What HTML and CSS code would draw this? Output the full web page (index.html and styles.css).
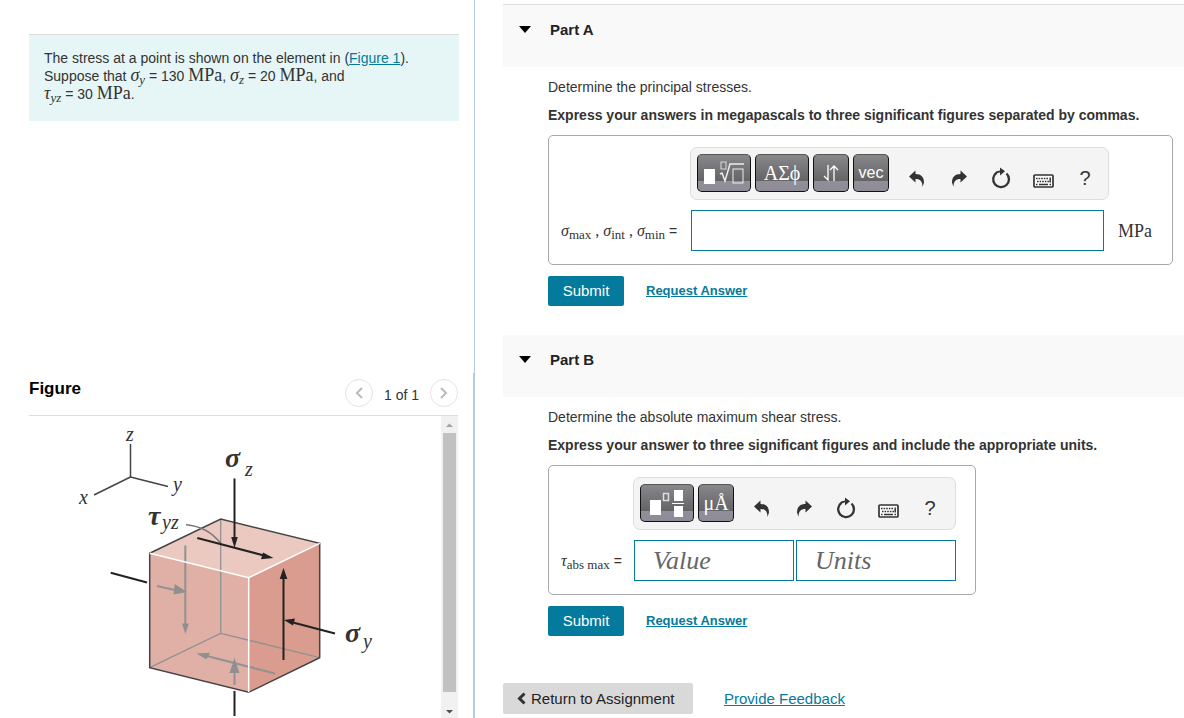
FILE: index.html
```html
<!DOCTYPE html>
<html lang="en">
<head>
    <meta charset="UTF-8">
    <meta name="viewport" content="width=device-width, initial-scale=1.0">
    <title>Principal stresses</title>
    <link rel="stylesheet" href="styles.css">
</head>
<body>
    <!-- shared toolbar icons -->
    <svg class="sprite" width="0" height="0" aria-hidden="true">
        <symbol id="undo" viewBox="0 0 16 17">
            <path d="M0 6.5 6.5 0.5V4C12 4 15 7 15 12.5L13.5 17C13.5 11.500 11.500 9 6.500 9V12.500Z"/>
        </symbol>
        <symbol id="redo" viewBox="0 0 16 17">
            <path d="M16 6.5 9.500 0.500V4C4 4 1 7 1 12.500L2.500 17C2.500 11.500 4.500 9 9.500 9V12.500Z"/>
        </symbol>
        <symbol id="reset" viewBox="0 0 20 22">
            <path d="M5.500 5.800A7.900 7.900 0 1 0 15.500 6.500" fill="none" stroke="#333" stroke-width="2.300"/>
            <path d="M9 0.500 14 4.300 9 8.500V5.300L5 6.700V4.500L9 3.400Z"/>
        </symbol>
        <symbol id="keyboard" viewBox="0 0 21 14">
            <rect x="1" y="1" width="19" height="12" rx="1" fill="#fff" stroke="#333" stroke-width="1.700"/>
            <path d="M3 4.500H16M4 7.500H16" stroke="#333" stroke-width="1.600" stroke-dasharray="1.600 1"/>
            <path d="M17.200 3.500V8.500M3 10.500H4.500M6 10.500H15M16.500 10.500H18" stroke="#333" stroke-width="1.500"/>
        </symbol>
        <symbol id="caret" viewBox="0 0 12 7">
            <path d="M0 0H12L6 7Z"/>
        </symbol>
    </svg>

    <div class="page">
        <aside class="left">
            <section class="problem-pane">
                <p class="problem">
                    The stress at a point is shown on the element in (<a href="#figure">Figure 1</a>).
                    Suppose that <span class="nowrap"><span class="math"><i>σ<sub>y</sub></i></span> = 130 <span class="math">MPa</span></span>,
                    <span class="nowrap"><span class="math"><i>σ<sub>z</sub></i></span> = 20 <span class="math">MPa</span></span>, and
                    <span class="nowrap"><span class="math"><i>τ<sub>yz</sub></i></span> = 30 <span class="math">MPa</span>.</span>
                </p>
            </section>

            <section class="figure-pane" id="figure">
                <div class="figure-header">
                    <h2>Figure</h2>
                    <div class="pager">
                        <button type="button" aria-label="Previous figure"><svg width="8" height="12" viewBox="0 0 8 12"><path d="M7 1 2 6l5 5"/></svg></button>
                        <span>1 of 1</span>
                        <button type="button" aria-label="Next figure"><svg width="8" height="12" viewBox="0 0 8 12"><path d="M1 1l5 5-5 5"/></svg></button>
                    </div>
                </div>
                <div class="figure-body">
                    <svg class="drawing" width="412" height="302" viewBox="29 416 412 302">
                        <!-- axes -->
                        <g class="axes">
                            <path d="M130.500 444V477L94 495M130.500 477 168 486.500"/>
                        </g>
                        <!-- cube faces -->
                        <path fill="#ebc9c1" d="M220.700 519 319.700 543.300 248.700 577.700 149.700 553.300Z"/>
                        <path fill="#e0b0a7" d="M149.700 553.300 248.700 577.700V692.300L149.700 667.700Z"/>
                        <path fill="#d99c8e" d="M248.700 577.700 319.700 543.300V657.700L248.700 692.300Z"/>
                        <!-- hidden edges and rear arrows -->
                        <g class="hidden-lines">
                            <path d="M220.700 519V633.300L149.700 667.700M220.700 633.300 319.700 657.700"/>
                            <path class="thick" d="M185.300 545.500V625M157 586 177 590.500M275 673.500 207 656M234.500 685V670"/>
                            <path class="head" d="M182 623.500H188.800L185.400 634Z"/>
                            <path class="head" d="M174.700 584 187 592 173.500 594.500Z"/>
                            <path class="head" d="M196.500 653.500 210 652.800 206.500 659.500Z"/>
                            <path class="head" d="M234.500 658 239.500 673H229.500Z"/>
                        </g>
                        <g class="edges">
                            <path d="M149.700 553.300 220.700 519 319.700 543.300V657.700L248.700 692.300 149.700 667.700Z"/>
                            <path class="light" d="M149.700 553.300 248.700 577.700 319.700 543.300M248.700 577.700V692.300"/>
                        </g>
                        <path class="leader" d="M186 524.700C201 526 212 532 220.700 543.300"/>
                        <!-- front arrows -->
                        <g class="arrows">
                            <path d="M234.500 478.500V538M197.300 538 264 555.500M110.700 572.700 147 582.500M283.500 660V577M335 633.500 293 622.500M234.500 691V716"/>
                            <path class="head" d="M231.200 537H237.800L234.500 548Z"/>
                            <path class="head" d="M263 552.500 273.500 558 261 559.300Z"/>
                            <path class="head" d="M283.500 568 287.300 579H279.700Z"/>
                            <path class="head" d="M284 620 295 618.500 293 625.500Z"/>
                        </g>
                        <g class="names">
                            <text x="126" y="441">z</text>
                            <text x="173" y="491">y</text>
                            <text x="79" y="504">x</text>
                            <text class="greek" x="225" y="467">σ</text>
                            <text x="245" y="476">z</text>
                            <text class="greek" x="148" y="525">τ</text>
                            <text x="162" y="529">yz</text>
                            <text class="greek" x="345" y="642">σ</text>
                            <text x="363" y="648">y</text>
                        </g>
                    </svg>
                    <div class="scrollbar" aria-hidden="true">
                        <svg width="17" height="17" viewBox="0 0 17 17"><path fill="#a3a3a3" d="M5 11h7L8.500 7.500Z"/></svg>
                        <div class="thumb"></div>
                        <svg width="17" height="17" viewBox="0 0 17 17"><path fill="#505050" d="M5 9h7L8.500 12.500Z"/></svg>
                    </div>
                </div>
            </section>
        </aside>

        <main class="right">
            <section class="part first">
                <header class="part-header">
                    <svg width="12" height="7"><use href="#caret"/></svg>
                    <h2>Part A</h2>
                </header>
                <div class="part-body">
                    <p>Determine the principal stresses.</p>
                    <p class="instructions">Express your answers in megapascals to three significant figures separated by commas.</p>
                    <div class="answer wide">
                        <div class="toolbar">
                            <button type="button" class="palette large" aria-label="Templates">
                                <svg width="42" height="26" viewBox="0 0 42 26">
                                    <rect x="1" y="9" width="11" height="15" fill="#fff"/>
                                    <rect x="18" y="2" width="5" height="7" fill="none" stroke="#ddd"/>
                                    <path d="M17 14l2-1 3 8L27 4h14" fill="none" stroke="#eee" stroke-width="1.500"/>
                                    <rect x="30" y="9" width="10" height="14" fill="none" stroke="#eee"/>
                                </svg>
                            </button>
                            <button type="button" class="palette large serif">ΑΣϕ</button>
                            <button type="button" class="palette" aria-label="Arrows">
                                <svg width="16" height="18" viewBox="0 0 16 18"><path d="M5 1v15M1 12l4 4V1M11 17V2M7 6l4-4 4 4" fill="none" stroke="#fff" stroke-width="1.300"/></svg>
                            </button>
                            <button type="button" class="palette last">vec</button>
                            <button type="button" class="tool" aria-label="Undo"><svg width="16" height="17"><use href="#undo"/></svg></button>
                            <button type="button" class="tool" aria-label="Redo"><svg width="16" height="17"><use href="#redo"/></svg></button>
                            <button type="button" class="tool" aria-label="Reset"><svg width="20" height="22"><use href="#reset"/></svg></button>
                            <button type="button" class="tool low" aria-label="Keyboard"><svg width="21" height="14"><use href="#keyboard"/></svg></button>
                            <button type="button" class="tool">?</button>
                        </div>
                        <label for="stresses"><i>σ</i><sub>max</sub> , <i>σ</i><sub>int</sub> , <i>σ</i><sub>min</sub> <span class="eq">=</span></label>
                        <div class="inputs"><input type="text" id="stresses"></div>
                        <span class="unit">MPa</span>
                    </div>
                    <div class="actions">
                        <button type="button" class="submit">Submit</button>
                        <a href="#">Request Answer</a>
                    </div>
                </div>
            </section>

            <section class="part">
                <header class="part-header">
                    <svg width="12" height="7"><use href="#caret"/></svg>
                    <h2>Part B</h2>
                </header>
                <div class="part-body">
                    <p>Determine the absolute maximum shear stress.</p>
                    <p class="instructions">Express your answer to three significant figures and include the appropriate units.</p>
                    <div class="answer">
                        <div class="toolbar">
                            <button type="button" class="palette large" aria-label="Templates">
                                <svg width="36" height="28" viewBox="0 0 36 28">
                                    <rect x="1" y="11" width="11" height="15" fill="#fff"/>
                                    <rect x="14.500" y="4.500" width="5" height="7" fill="none" stroke="#ddd" stroke-width="1.500"/>
                                    <rect x="25" y="1" width="9" height="11" fill="#fff"/>
                                    <path d="M23 14.500h12" stroke="#fff"/>
                                    <rect x="25" y="17" width="9" height="11" fill="#fff"/>
                                </svg>
                            </button>
                            <button type="button" class="palette last serif">μÅ</button>
                            <button type="button" class="tool" aria-label="Undo"><svg width="16" height="17"><use href="#undo"/></svg></button>
                            <button type="button" class="tool" aria-label="Redo"><svg width="16" height="17"><use href="#redo"/></svg></button>
                            <button type="button" class="tool" aria-label="Reset"><svg width="20" height="22"><use href="#reset"/></svg></button>
                            <button type="button" class="tool low" aria-label="Keyboard"><svg width="21" height="14"><use href="#keyboard"/></svg></button>
                            <button type="button" class="tool">?</button>
                        </div>
                        <label for="shear"><i>τ</i><sub>abs max</sub> <span class="eq">=</span></label>
                        <div class="inputs">
                            <input type="text" id="shear" placeholder="Value">
                            <input type="text" placeholder="Units" aria-label="Units">
                        </div>
                    </div>
                    <div class="actions">
                        <button type="button" class="submit">Submit</button>
                        <a href="#">Request Answer</a>
                    </div>
                </div>
            </section>

            <footer class="footer">
                <button type="button" class="return"><svg width="9" height="13" viewBox="0 0 9 13"><path d="M7.500 1.500 2.500 6.500l5 5"/></svg>Return to Assignment</button>
                <a href="#">Provide Feedback</a>
            </footer>
        </main>
    </div>
</body>
</html>
```

FILE: styles.css
```css
* { margin: 0; padding: 0; box-sizing: border-box; }
body {
    font-family: "Liberation Sans", Arial, sans-serif;
    font-size: 14px;
    line-height: 20px;
    color: #333;
    background: #fff;
}
a { color: #047a9c; }
button { font-family: inherit; cursor: pointer; }
svg { display: block; flex: none; }
sub { font-size: 13px; line-height: 0; vertical-align: -3px; }
.sprite { position: absolute; }
.nowrap { white-space: nowrap; }
.page {
    display: flex;
    height: 100vh;
    overflow: hidden;
}

/* left column */
.left {
    flex: 0 0 40%;
    display: flex;
    flex-direction: column;
}
.problem-pane {
    flex: 0 0 52%;
    padding: 34px 15px 0 29px;
    border-right: 1px solid #b8cbdf;
}
.problem {
    padding: 14px 36px 18px 15px;
    line-height: 18px;
    background: #e6f6f7;
    border-top: 1px solid #ddd;
}
.math {
    font-family: "Liberation Serif", "Times New Roman", serif;
    font-size: 18px;
    line-height: 0;
}
.figure-pane {
    flex: 1;
    min-height: 0;
    display: flex;
    flex-direction: column;
    padding: 0 15px 0 29px;
    border-right: 2px solid #b8cbdf;
}
.figure-header {
    display: flex;
    justify-content: space-between;
    padding: 6px 0 8px;
    border-bottom: 1px solid #ddd;
}
.figure-header h2 {
    font-size: 17px;
    line-height: 20px;
    color: #000;
}
.pager { display: flex; gap: 11px; }
.pager span { padding-top: 6px; }
.pager button {
    width: 28px;
    height: 28px;
    border: 1px solid #e4e4e4;
    border-radius: 50%;
    background: #fff;
    display: flex;
    align-items: center;
    justify-content: center;
}
.pager path { fill: none; stroke: #bbb; stroke-width: 2; }
.figure-body {
    flex: 1;
    min-height: 0;
    display: flex;
    justify-content: space-between;
    overflow: hidden;
}
.scrollbar {
    flex: 0 0 17px;
    display: flex;
    flex-direction: column;
    background: #f1f1f1;
}
.thumb {
    flex: 0 1 259px;
    margin: 0 2px auto;
    background: #c1c1c1;
}

/* stress element drawing */
.axes, .edges, .leader { fill: none; stroke: #444; stroke-width: 1.5; }
.leader { stroke: #777; }
.edges .light { stroke: #fff; }
.hidden-lines { fill: none; stroke: #929292; stroke-width: 1.3; }
.hidden-lines .thick { stroke-width: 2; }
.hidden-lines .head { fill: #8f8f8f; stroke: none; }
.arrows { fill: none; stroke: #222; stroke-width: 2; }
.arrows .head { fill: #222; stroke: none; }
.names {
    font: italic 20px "Liberation Serif", "Times New Roman", serif;
    fill: #333;
}
.names .greek { font-size: 28px; font-weight: bold; }

/* right column */
.right {
    flex: 1;
    min-width: 0;
    padding: 4px 0 0 28px;
}
.part { margin-bottom: 29px; }
.part-header {
    display: flex;
    gap: 19px;
    height: 62px;
    padding: 15px 16px;
    background: #f9f9f9;
    color: #222;
}
.first .part-header {
    height: 63px;
    border-top: 1px solid #ddd;
}
.part-header h2 { font-size: 15px; line-height: 20px; }
.part-header svg { margin-top: 6px; }
.part-body { padding: 10px 11px 0 45px; }
.instructions { margin: 8px 0 10px; font-weight: bold; }
.answer {
    display: grid;
    grid-template-columns: 72px auto;
    align-items: center;
    justify-content: start;
    row-gap: 10px;
    width: fit-content;
    padding: 11px 19px 13px 12px;
    border: 1px solid #a6a8ab;
    border-radius: 5px;
}
.answer.wide {
    grid-template-columns: 129px auto auto;
    width: auto;
}
.answer label {
    grid-column: 1;
    grid-row: 2;
    font-family: "Liberation Serif", "Times New Roman", serif;
    font-size: 16px;
    white-space: nowrap;
}
.answer .eq { font-family: "Liberation Sans", Arial, sans-serif; font-size: 14px; }
.toolbar {
    grid-column: 2;
    grid-row: 1;
    display: flex;
    gap: 4px;
    padding: 6px 4px 7px 6px;
    background: #f4f4f4;
    border: 1px solid #ddd;
    border-radius: 7px;
}
.palette {
    width: 36px;
    height: 38px;
    display: flex;
    align-items: center;
    justify-content: center;
    font-size: 16px;
    color: #fff;
    background: linear-gradient(#88888c, #646466 72%, #928f9b 73%, #8d8b96);
    border: 1px solid #111;
    border-top-color: #555;
    border-radius: 5px;
}
.palette.large { width: 54px; }
.palette.last { margin-right: 5px; }
.palette.serif { font-family: "Liberation Serif", "DejaVu Serif", serif; font-size: 20px; }
.tool {
    width: 38px;
    padding-top: 10px;
    display: flex;
    align-items: center;
    justify-content: center;
    font-size: 20px;
    color: #333;
    fill: #333;
    background: none;
    border: none;
}
.tool.low { padding-top: 15px; }
.inputs {
    grid-column: 2;
    grid-row: 2;
    display: flex;
    gap: 2px;
    padding-left: 1px;
}
.inputs input {
    width: 160px;
    height: 41px;
    padding: 0 18px;
    font: italic 26px "Liberation Serif", "Times New Roman", serif;
    color: #333;
    background: #fff;
    border: 1px solid #047a9c;
}
.wide .inputs input { width: 413px; }
.inputs input::placeholder { color: #666; }
.unit {
    grid-column: 3;
    grid-row: 2;
    padding-left: 9px;
    font-family: "Liberation Serif", "Times New Roman", serif;
    font-size: 18px;
}
.actions {
    display: flex;
    align-items: center;
    gap: 22px;
    margin-top: 11px;
}
.actions a { font-size: 13px; font-weight: bold; }
.submit {
    width: 76px;
    height: 30px;
    padding-bottom: 2px;
    font-size: 15px;
    color: #fff;
    background: #047a9c;
    border: none;
    border-radius: 2px;
}
.footer {
    display: flex;
    align-items: center;
    gap: 31px;
    padding-top: 18px;
    font-size: 15px;
}
.return {
    display: flex;
    align-items: center;
    gap: 5px;
    width: 190px;
    height: 31px;
    padding: 0 14px;
    font-size: 15px;
    color: #222;
    background: #d9d9d9;
    border: none;
    border-radius: 2px;
}
.return path { fill: none; stroke: #333; stroke-width: 3; }

@media only screen and (max-width: 900px) {
    .page { flex-direction: column; height: auto; }
    .figure-pane, .problem-pane { border-right: none; }
}
```
